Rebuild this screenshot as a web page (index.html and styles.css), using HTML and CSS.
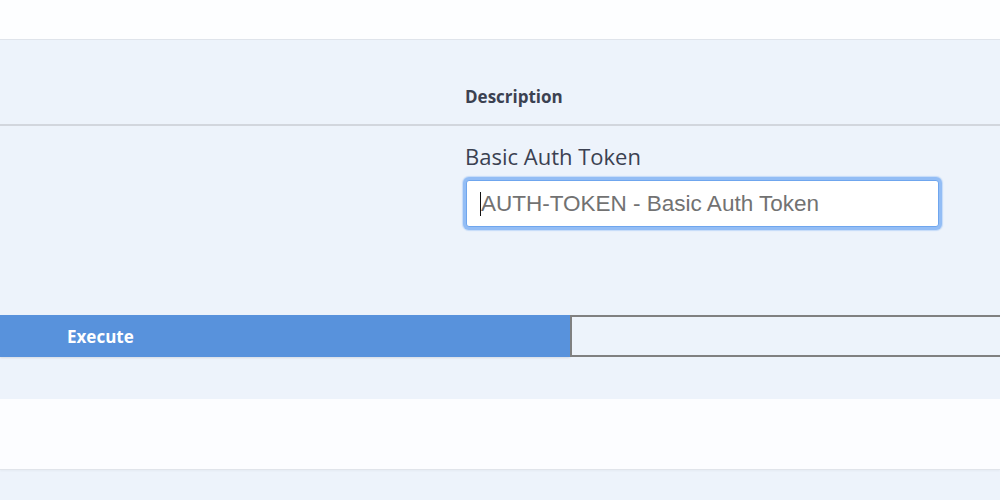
FILE: index.html
```html
<!DOCTYPE html>
<html>
<head>
<meta charset="utf-8">
<link rel="stylesheet" href="styles.css">
</head>
<body>
<div class="topbar"></div>
<div class="opblock">
  <div class="table-head">
    <div class="col-name"></div>
    <div class="col-desc">Description</div>
  </div>
  <div class="param-row">
    <div class="col-name"></div>
    <div class="col-desc">
      <div class="param-label">Basic Auth Token</div>
      <div class="input-wrap">
        <input class="param-input" type="text" placeholder="AUTH-TOKEN - Basic Auth Token">
        <span class="caret"></span>
      </div>
    </div>
  </div>
  <div class="actions">
    <button class="btn-execute">Execute</button>
    <div class="btn-clear"></div>
  </div>
</div>
<div class="responses"></div>
<div class="after"></div>
</body>
</html>
```
FILE: styles.css
```css
html, body {
  margin: 0;
  padding: 0;
  background: #edf3fb;
  font-family: "Open Sans", "Noto Sans", sans-serif;
  overflow: hidden;
}
.topbar {
  height: 39px;
  background: #fdfeff;
  border-bottom: 1px solid #dfe4eb;
  box-shadow: 0 1px 2px rgba(0, 0, 0, 0.04);
}
.opblock {
  background: #edf3fb;
}
.table-head {
  display: grid;
  grid-template-columns: 465px 1fr;
  height: 84px;
  border-bottom: 2px solid #d2d6dd;
  box-sizing: content-box;
}
.table-head .col-desc {
  padding-top: 45px;
  font-size: 17px;
  line-height: 23px;
  font-weight: 700;
  color: #3b4151;
}
.param-row {
  display: grid;
  grid-template-columns: 465px 1fr;
  padding-top: 15px;
}
.param-label {
  font-size: 22px;
  line-height: 30px;
  color: #3b4151;
  margin-bottom: 9px;
}
.input-wrap {
  position: relative;
  width: 473px;
  margin-left: 1px;
}
.param-input {
  display: block;
  box-sizing: border-box;
  width: 473px;
  height: 47px;
  margin: 0;
  padding: 0 14px;
  border: 1px solid #6fa6ee;
  border-radius: 3px;
  background: #ffffff;
  box-shadow: 0 0 0 3px #93bdf5, 0 0 1px 4px rgba(147, 189, 245, 0.45);
  font-family: "Liberation Sans", Arial, sans-serif;
  font-size: 22.5px;
  color: #757575;
  outline: none;
}
.param-input::placeholder {
  color: #727272;
  opacity: 1;
}
.caret {
  position: absolute;
  left: 14px;
  top: 12px;
  width: 1px;
  height: 24px;
  background: #111;
}
.actions {
  display: flex;
  margin-top: 88px;
  height: 42px;
  padding-bottom: 42px;
}
.btn-execute {
  width: 570px;
  height: 42px;
  margin: 0;
  padding: 0 0 0 67px;
  border: none;
  background: #5892dc;
  color: #ffffff;
  font-family: "Open Sans", "Noto Sans", sans-serif;
  font-size: 17px;
  font-weight: 700;
  text-align: left;
  box-shadow: 0 1px 2px rgba(0, 0, 0, 0.1);
}
.btn-clear {
  flex: 1;
  box-sizing: border-box;
  height: 42px;
  border: 2px solid #808080;
  border-right: none;
  background: #edf3fb;
}
.responses {
  height: 70px;
  background: #fcfdff;
  border-bottom: 1px solid #e0e4ea;
  box-shadow: 0 1px 2px rgba(0, 0, 0, 0.04);
}
.after {
  height: 40px;
}
```
